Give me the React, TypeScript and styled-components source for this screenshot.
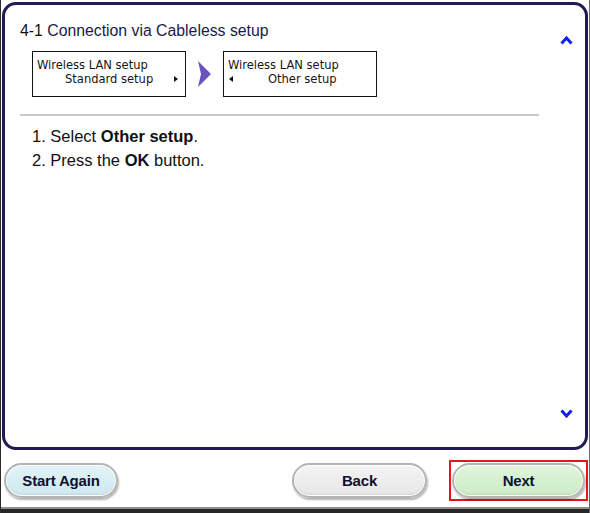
import React from "react";
import styled, { createGlobalStyle } from "styled-components";

const Global = createGlobalStyle`
  html, body { margin: 0; padding: 0; background: #fff; }
  * { box-sizing: border-box; }
`;

const Page = styled.div`
  width: 590px;
  height: 513px;
  display: flex;
  flex-direction: column;
  background: #fff;
  border-left: 1px solid #2a2a2a;
  border-right: 1px solid #6a6a6a;
  font-family: "Liberation Sans", Arial, sans-serif;
`;

const Panel = styled.section`
  position: relative;
  margin: 2px 1px 0 1px;
  height: 448px;
  border: 3px solid #221a52;
  border-radius: 14px;
  padding: 16px 0 0 15px;
  display: flex;
  flex-direction: column;
`;

const Title = styled.h1`
  margin: 0;
  font-size: 15.8px;
  line-height: 19px;
  font-weight: normal;
  color: #1a1a48;
`;

const Num = styled.span`
  color: #111;
`;

const Flow = styled.div`
  display: flex;
  align-items: center;
  margin: 11px 0 0 12px;
`;

const Screen = styled.div`
  width: 154px;
  height: 46px;
  border: 1px solid #111;
  padding: 6px 4px 0 4px;
  font-family: "DejaVu Sans Condensed", "DejaVu Sans", sans-serif;
  font-size: 12.8px;
  line-height: 14px;
  color: #161616;
`;

const ScreenLine = styled.div`
  display: flex;
  align-items: center;
  white-space: nowrap;
`;

const Pad = styled.span<{ $w: number }>`
  display: inline-block;
  flex: none;
  width: ${(p) => p.$w}px;
`;

const Tri = styled.span<{ $dir: "l" | "r" }>`
  display: inline-block;
  flex: none;
  width: 0;
  height: 0;
  border-top: 3px solid transparent;
  border-bottom: 3px solid transparent;
  ${(p) =>
    p.$dir === "r"
      ? "border-left: 4px solid #111; margin-left: auto; margin-right: 3px;"
      : "border-right: 4px solid #111; margin-left: 1px;"}
`;

const Arrow = styled.svg`
  width: 14px;
  height: 26px;
  margin: 0 12px 0 11px;
  display: block;
`;

const Rule = styled.hr`
  width: 519px;
  height: 2px;
  border: 0;
  margin: 17px 0 0 0;
  background: #c9c9c9;
`;

const Steps = styled.ol`
  margin: 8px 0 0 0;
  padding: 0 0 0 12px;
  list-style: none;
  font-size: 16.5px;
  line-height: 24px;
  color: #111;
`;

const Step = styled.li`
  margin: 0;
  b { font-weight: bold; }
`;

const Chevron = styled.svg<{ $top?: number; $bottom?: number }>`
  position: absolute;
  right: 12px;
  width: 13px;
  height: 9px;
  ${(p) => (p.$top !== undefined ? `top: ${p.$top}px;` : `bottom: ${p.$bottom}px;`)}
`;

const Footer = styled.footer`
  height: 57px;
  padding: 4px 1px 0 3px;
  display: flex;
  align-items: center;
`;

const Spacer = styled.div`
  flex: 1;
`;

const Pill = styled.button<{ $tone: "blue" | "gray" | "green"; $w: number }>`
  width: ${(p) => p.$w}px;
  height: 35px;
  border-radius: 18px;
  border: 2px solid #b4b4b4;
  box-shadow: inset 0 0 0 1px #ffffff, inset 0 -2px 2px rgba(0, 0, 0, 0.08),
    1px 2px 2px rgba(0, 0, 0, 0.3);
  background: ${(p) =>
    p.$tone === "blue"
      ? "linear-gradient(#e2f3f8, #cfe8f0)"
      : p.$tone === "green"
      ? "linear-gradient(#e0f5dc, #cbecc4)"
      : "linear-gradient(#f4f4f4, #e6e6e6)"};
  font-family: "Liberation Sans", Arial, sans-serif;
  font-weight: bold;
  font-size: 15px;
  letter-spacing: -0.2px;
  color: #101030;
  padding: 0;
  cursor: pointer;
`;

const Focus = styled.div`
  margin-left: 22px;
  border: 2px solid #e8141c;
  padding: 1px;
  display: flex;
`;

const Strip = styled.div`
  height: 6px;
  border-top: 2px solid #8f8f8f;
  background: #262626;
`;

export default function App() {
  return (
    <>
      <Global />
      <Page>
        <Panel>
          <Title>
            <Num>4-1</Num> Connection via Cableless setup
          </Title>
          <Flow>
            <Screen>
              <ScreenLine>Wireless LAN setup</ScreenLine>
              <ScreenLine>
                <Pad $w={28} />
                Standard setup
                <Tri $dir="r" />
              </ScreenLine>
            </Screen>
            <Arrow viewBox="0 0 14 26">
              <polygon points="1,0 14,13 1,26 4,13" fill="#6a52c2" />
            </Arrow>
            <Screen>
              <ScreenLine>Wireless LAN setup</ScreenLine>
              <ScreenLine>
                <Tri $dir="l" />
                <Pad $w={35} />
                Other setup
              </ScreenLine>
            </Screen>
          </Flow>
          <Rule />
          <Steps>
            <Step>
              1. Select <b>Other setup</b>.
            </Step>
            <Step>
              2. Press the <b>OK</b> button.
            </Step>
          </Steps>
          <Chevron $top={31} viewBox="0 0 13 9">
            <polyline points="1.5,7.5 6.5,2 11.5,7.5" fill="none" stroke="#1020e6" strokeWidth="3" />
          </Chevron>
          <Chevron $bottom={29} viewBox="0 0 13 9">
            <polyline points="1.5,1.5 6.5,7 11.5,1.5" fill="none" stroke="#1020e6" strokeWidth="3" />
          </Chevron>
        </Panel>
        <Footer>
          <Pill $tone="blue" $w={114}>Start Again</Pill>
          <Spacer />
          <Pill $tone="gray" $w={135}>Back</Pill>
          <Focus>
            <Pill $tone="green" $w={133}>Next</Pill>
          </Focus>
        </Footer>
        <Strip />
      </Page>
    </>
  );
}
